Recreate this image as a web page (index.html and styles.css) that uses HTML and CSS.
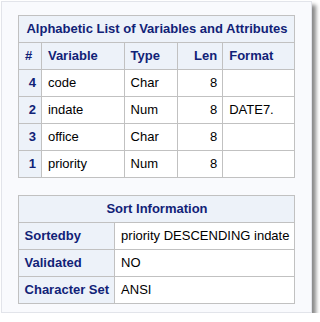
FILE: index.html
```html
<!DOCTYPE html>
<html lang="en">
<head>
  <meta charset="UTF-8" />
  <title>Contents</title>
  <link rel="stylesheet" href="styles.css">
</head>
<body>
  <div class="panel">
    <table class="attrs">
      <tr><th class="title" colspan="5">Alphabetic List of Variables and Attributes</th></tr>
      <tr>
        <th class="num">#</th>
        <th class="var">Variable</th>
        <th class="type">Type</th>
        <th class="len r">Len</th>
        <th class="fmt">Format</th>
      </tr>
      <tr><th class="r">4</th><td>code</td><td>Char</td><td class="r">8</td><td></td></tr>
      <tr><th class="r">2</th><td>indate</td><td>Num</td><td class="r">8</td><td>DATE7.</td></tr>
      <tr><th class="r">3</th><td>office</td><td>Char</td><td class="r">8</td><td></td></tr>
      <tr><th class="r">1</th><td>priority</td><td>Num</td><td class="r">8</td><td></td></tr>
    </table>

    <table class="sort">
      <tr><th class="title" colspan="2">Sort Information</th></tr>
      <tr><th class="label">Sortedby</th><td class="value">priority DESCENDING indate</td></tr>
      <tr><th class="label">Validated</th><td>NO</td></tr>
      <tr><th class="label">Character Set</th><td>ANSI</td></tr>
    </table>
  </div>
</body>
</html>
```

FILE: styles.css
```css
* {
  box-sizing: border-box;
}
body {
  margin: 0;
  background: #ffffff;
  font-family: "Liberation Sans", Arial, sans-serif;
  font-size: 13px;
  color: #000;
}
.panel {
  margin: 1px 0 0 1px;
  width: 311px;
  height: 312px;
  padding-top: 13px;
  background: #f9fafd;
  border: 1px solid #e2e4ea;
  box-shadow: 4px 4px 4px #8a8a8a;
}
table {
  border-collapse: collapse;
  margin: 0 auto;
  background: #ffffff;
}
th, td {
  border: 1px solid #c1c1c1;
  padding: 5px 5px 5px 6px;
  line-height: 16px;
  text-align: left;
  white-space: nowrap;
}
th {
  background: #edf2f9;
  color: #112277;
  font-weight: bold;
}
th.title {
  text-align: center;
}
.r {
  text-align: right;
}
.attrs {
  width: 277px;
}
.num { width: 23px; }
.var { width: 83px; }
.type { width: 54px; }
.len { width: 45px; }
.fmt { width: 72px; }
.sort {
  width: 276px;
  margin-top: 17px;
}
.label {
  width: 98px;
}
```
